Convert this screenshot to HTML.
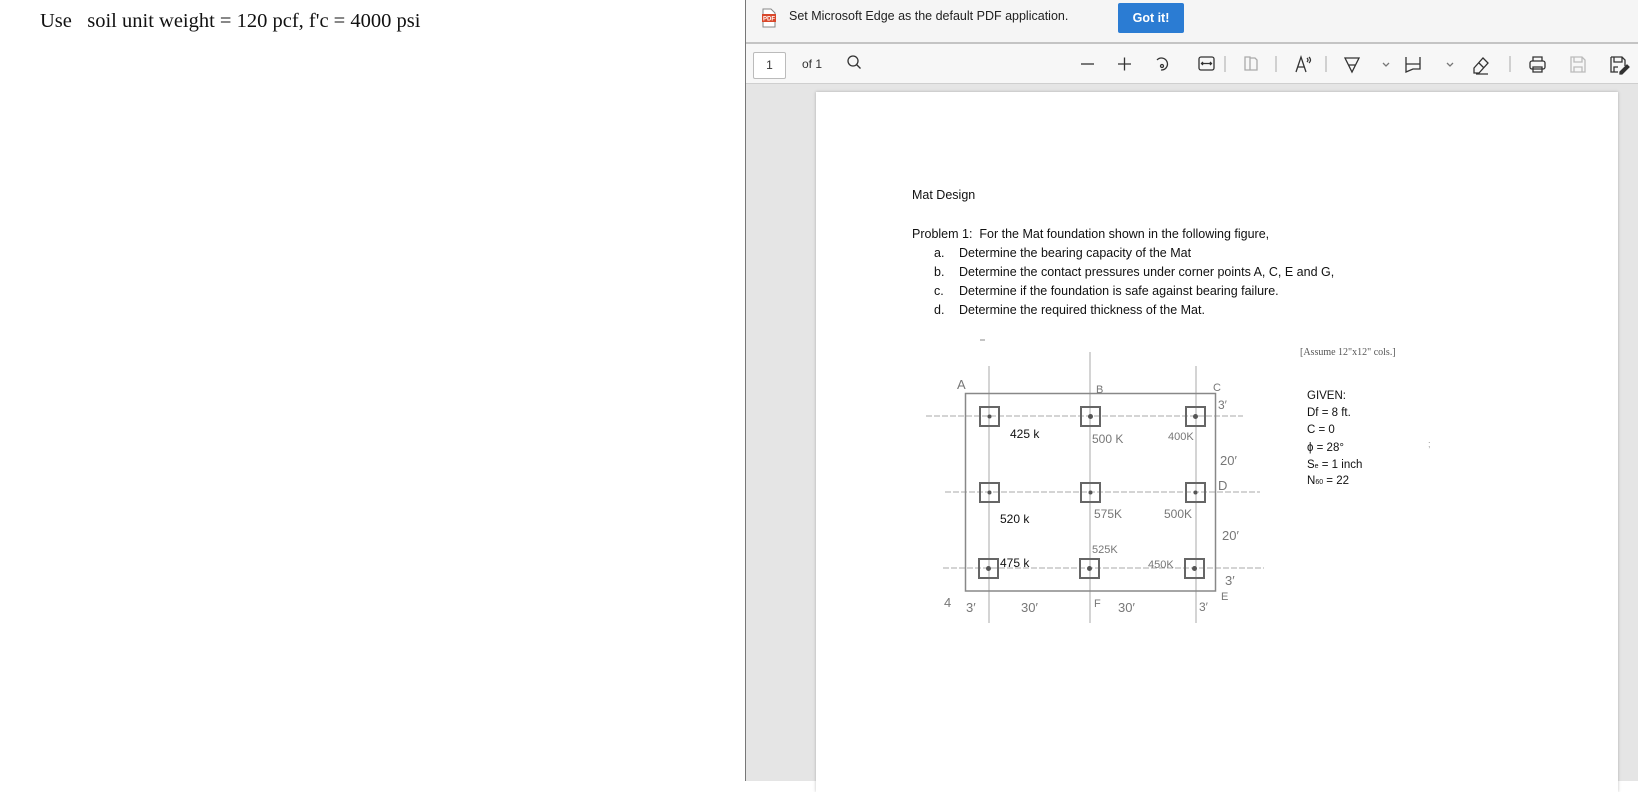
<!DOCTYPE html>
<html><head><meta charset="utf-8"><style>
*{margin:0;padding:0;box-sizing:border-box}
body{width:1638px;height:781px;overflow:hidden;background:#fff;position:relative;font-family:"Liberation Sans",sans-serif}
.abs{position:absolute}
#use{left:40px;top:10px;font-family:"Liberation Serif",serif;font-size:20.5px;color:#111;white-space:pre}
#viewer{left:745px;top:0;width:893px;height:781px;background:#e5e5e5;border-left:1px solid #777}
#banner{left:0;top:0;width:893px;height:42px;background:#f5f5f5}
#sep1{left:0;top:42px;width:893px;height:2px;background:#c4c4c4}
#tool{left:0;top:44px;width:893px;height:40px;background:#f7f7f7;border-bottom:1px solid #cfcfcf}
#page{left:70px;top:92px;width:802px;height:700px;background:#fff;box-shadow:0 0 3px rgba(0,0,0,.25)}
.tx{font-size:12.5px;color:#111;white-space:nowrap;position:absolute}
</style></head><body>
<div id="use" class="abs">Use   soil unit weight = 120 pcf, f'c = 4000 psi</div>
<div id="viewer" class="abs">
 <div id="banner" class="abs">
  <svg class="abs" style="left:16px;top:8px" width="14" height="20" viewBox="0 0 14 20"><path d="M1 1h8l4 4v14H1z" fill="#fff" stroke="#888"/><rect x="0" y="6" width="14" height="8" fill="#d9482b"/><text x="7" y="12.5" font-size="6" fill="#fff" text-anchor="middle" font-family="Liberation Sans" font-weight="bold">PDF</text></svg>
  <div class="abs" style="left:43px;top:9px;font-size:12.5px;color:#222">Set Microsoft Edge as the default PDF application.</div>
  <div class="abs" style="left:372px;top:3px;width:66px;height:30px;background:#2b7cd3;color:#fff;font-size:12.5px;font-weight:bold;text-align:center;line-height:30px;border-radius:2px">Got it!</div>
 </div>
 <div id="sep1" class="abs"></div>
 <div id="tool" class="abs">
  <div class="abs" style="left:7px;top:8px;width:33px;height:27px;border:1px solid #bbb;background:#fff;border-radius:2px;font-size:12px;text-align:center;line-height:25px;color:#333">1</div>
  <div class="abs" style="left:56px;top:13px;font-size:12px;color:#333">of 1</div>
  <svg class="abs" style="left:0;top:0" width="893" height="40" fill="none" stroke="#333" stroke-width="1.3">
   <circle cx="107" cy="17" r="5"/><path d="M110.5 20.5l4 4"/>
   <path d="M335 20h13"/><path d="M372 20h13M378.5 13.5v13"/>
   <path d="M411 16a6 6 0 1 1 4 10"/><circle cx="416" cy="22" r="1.5"/>
   <rect x="453" y="13" width="15" height="13" rx="2"/><path d="M456 19.5h9M457 18l-1.5 1.5 1.5 1.5M464 18l1.5 1.5-1.5 1.5"/>
   <path d="M479 12v16M530 12v16M580 12v16M764 12v16" stroke="#bbb"/>
   <path d="M499 13h5v13h-5zM504 14h5l2 2v10h-7" stroke="#aaa"/>
   <path d="M550 28l5-15 5 15M552 23h6M561 14q2 2 0 4M563 13q3 3 0 6"/>
   <path d="M599 14h14l-7 14zM603 21h6"/><path d="M637 19l3 3 3-3" stroke="#777"/>
   <path d="M660 13v7h14v-7M660 20v8l7-3h7v-5"/><path d="M701 19l3 3 3-3" stroke="#777"/>
   <path d="M728 24l9-10 5 5-9 10h-5zM733 19l5 5M730 30h12"/>
   <rect x="784" y="17" width="15" height="8" rx="2"/><path d="M787 17v-4h9v4M787 23h9v5h-9z"/>
   <path d="M825 13h11l3 3v12h-14zM828 13v5h8v-5M828 28v-5h8v5" stroke="#bbb"/>
   <path d="M865 13h11l3 3v6M865 13v15h7M868 13v5h8v-5M868 28v-5h4"/><path d="M874 28l7-7 2 2-7 7h-2z" fill="#333"/>
  </svg>
 </div>
 <div id="page" class="abs">
  <div class="tx" style="left:96px;top:96px">Mat Design</div>
  <div class="tx" style="left:96px;top:135px">Problem 1:&nbsp; For the Mat foundation shown in the following figure,</div>
  <div class="tx" style="left:118px;top:154px">a.</div><div class="tx" style="left:143px;top:154px">Determine the bearing capacity of the Mat</div>
  <div class="tx" style="left:118px;top:173px">b.</div><div class="tx" style="left:143px;top:173px">Determine the contact pressures under corner points A, C, E and G,</div>
  <div class="tx" style="left:118px;top:192px">c.</div><div class="tx" style="left:143px;top:192px">Determine if the foundation is safe against bearing failure.</div>
  <div class="tx" style="left:118px;top:211px">d.</div><div class="tx" style="left:143px;top:211px">Determine the required thickness of the Mat.</div>
 </div>
</div>
<svg class="abs" style="left:0;top:0" width="1638" height="781" font-family="Liberation Sans">
 <g stroke="#999" stroke-width="1" fill="none">
  <path d="M989 366V623M1090 352V623M1196 366V623" stroke="#aaa"/>
  <path d="M926 416H1243M945 492H1260M943 568H1264" stroke="#aaa" stroke-dasharray="6 2"/>
  <rect x="965.5" y="393.5" width="250" height="197.5" stroke="#888" stroke-width="1.5"/>
 </g>
 <g stroke="#666" stroke-width="2" fill="none">
  <rect x="980" y="407" width="19" height="19"/><rect x="1081" y="407" width="19" height="19"/><rect x="1186" y="407" width="19" height="19"/>
  <rect x="980" y="483" width="19" height="19"/><rect x="1081" y="483" width="19" height="19"/><rect x="1186" y="483" width="19" height="19"/>
  <rect x="979" y="559" width="19" height="19"/><rect x="1080" y="559" width="19" height="19"/><rect x="1185" y="559" width="19" height="19"/>
 </g>
 <g fill="#555">
  <circle cx="989.5" cy="416.5" r="2"/><circle cx="1090.5" cy="416.5" r="2.5"/><circle cx="1195.5" cy="416.5" r="2.5"/>
  <circle cx="989.5" cy="492.5" r="2"/><circle cx="1090.5" cy="492.5" r="2"/><circle cx="1195.5" cy="492.5" r="2"/>
  <circle cx="988.5" cy="568.5" r="2.5"/><circle cx="1089.5" cy="568.5" r="2.5"/><circle cx="1194.5" cy="568.5" r="2.5"/>
 </g>
 <g fill="#777" font-size="13">
  <text x="957" y="389">A</text><text x="1096" y="393" font-size="11">B</text><text x="1213" y="391" font-size="11">C</text>
  <text x="1218" y="490">D</text><text x="1221" y="600" font-size="11">E</text><text x="1094" y="607" font-size="11">F</text><text x="944" y="607">4</text>
  <text x="1218" y="409" font-size="12">3′</text><text x="1220" y="465">20′</text><text x="1222" y="540">20′</text><text x="1225" y="585">3′</text>
  <text x="966" y="612">3′</text><text x="1021" y="612">30′</text><text x="1118" y="612">30′</text><text x="1199" y="611" font-size="12">3′</text>
  <text x="1092" y="443" font-size="12">500 K</text><text x="1168" y="440" font-size="11">400K</text>
  <text x="1094" y="518" font-size="12">575K</text><text x="1164" y="518" font-size="12">500K</text>
  <text x="1092" y="553" font-size="11">525K</text><text x="1148" y="568" font-size="11">450K</text>
 </g>
 <g fill="#111" font-size="12">
  <text x="1010" y="438">425 k</text><text x="1000" y="523">520 k</text><text x="1000" y="567">475 k</text>
 </g>
 <path d="M980 340h5" stroke="#888"/>
 <text x="1300" y="355" font-family="Liberation Serif" font-size="10" fill="#555">[Assume 12"x12" cols.]</text>
 <g fill="#111" font-size="11.5">
  <text x="1307" y="399">GIVEN:</text><text x="1307" y="416">Df = 8 ft.</text><text x="1307" y="433">C = 0</text>
  <text x="1307" y="451">ϕ = 28°</text><text x="1307" y="468">S<tspan font-size="7">e</tspan> = 1 inch</text><text x="1307" y="484">N<tspan font-size="7">60</tspan> = 22</text>
 </g>
 <text x="1428" y="447" font-size="9" fill="#999">;</text>
</svg>
</body></html>
